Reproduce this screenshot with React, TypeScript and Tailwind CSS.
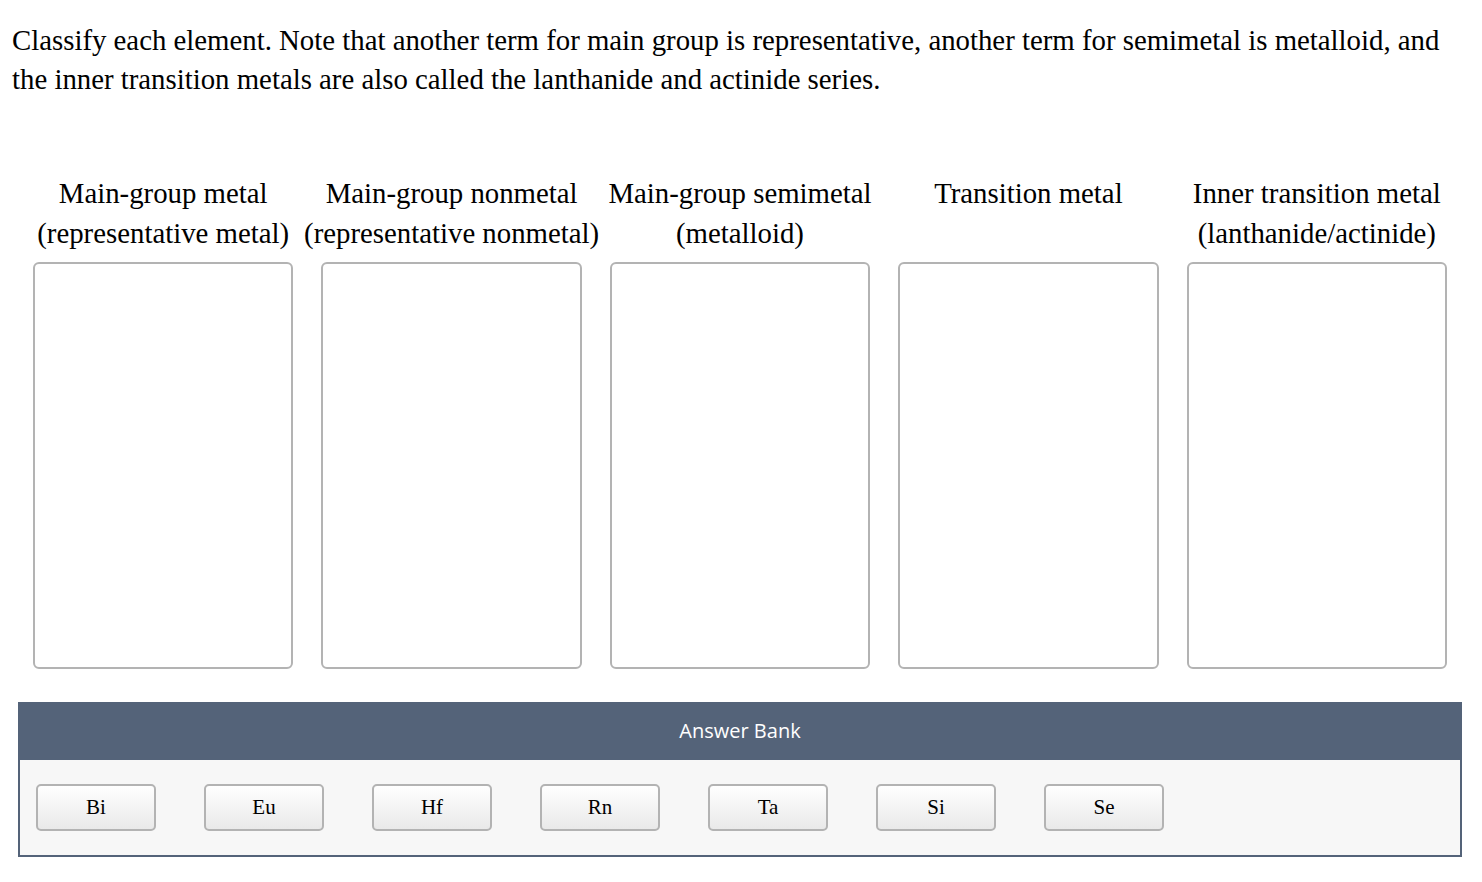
const categories = [
  ["Main-group metal", "(representative metal)"],
  ["Main-group nonmetal", "(representative nonmetal)"],
  ["Main-group semimetal", "(metalloid)"],
  ["Transition metal", ""],
  ["Inner transition metal", "(lanthanide/actinide)"],
];

const elements = ["Bi", "Eu", "Hf", "Rn", "Ta", "Si", "Se"];

export default function App() {
  return (
    <div className="min-h-screen w-full bg-white text-black font-['Liberation_Serif',serif]">
      {/* prompt */}
      <p className="pl-3 pr-5 pt-[21px] font-['Liberation_Serif',serif] text-[28.8px] leading-[39px]">
        Classify each element. Note that another term for main group is representative, another term for semimetal is
        metalloid, and the inner transition metals are also called the lanthanide and actinide series.
      </p>

      {/* drop zones */}
      <div className="ml-[19px] mt-[74px] grid w-[1442px] grid-cols-5">
        {categories.map(([title, sub]) => (
          <div key={title} className="flex flex-col px-[14px]">
            <div className="flex h-[80px] flex-col items-center font-['Liberation_Serif',serif] text-[28.8px] leading-[40px]">
              <span className="whitespace-nowrap">{title}</span>
              {sub && <span className="whitespace-nowrap">{sub}</span>}
            </div>
            <div className="mt-[9px] h-[407px] rounded-[6px] border-2 border-[#b3b3b3] bg-white" />
          </div>
        ))}
      </div>

      {/* answer bank */}
      <div className="ml-[18px] mt-[33px] w-[1444px]">
        <div className="flex h-[58px] items-center justify-center bg-[#546379] font-['Open_Sans','Noto_Sans',sans-serif] text-[20px] text-white">
          Answer Bank
        </div>
        <div className="flex gap-[48px] border-2 border-t-0 border-[#546379] bg-[#f7f7f7] pl-4 pt-6 pb-6">
          {elements.map((el) => (
            <button
              key={el}
              className="flex h-[47px] w-[120px] items-center justify-center rounded-[5px] border-2 border-[#b3b3b3] bg-gradient-to-b from-white to-[#e9e9e9] font-['Liberation_Serif',serif] text-[21px]"
            >
              {el}
            </button>
          ))}
        </div>
      </div>
    </div>
  );
}
